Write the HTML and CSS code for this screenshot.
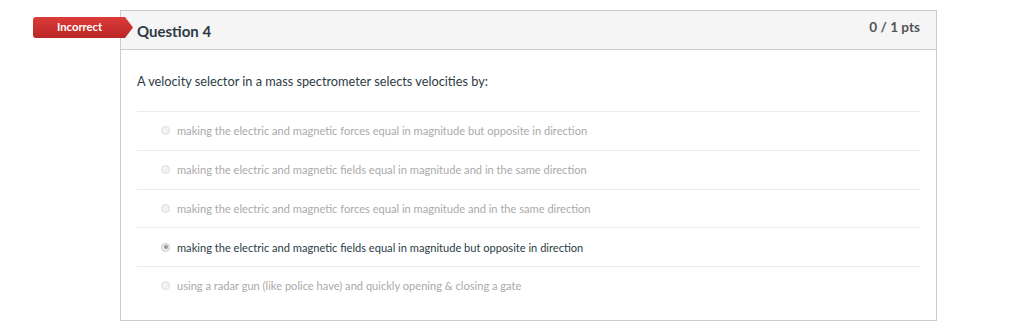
FILE: index.html
```html
<!DOCTYPE html>
<html>
<head>
<meta charset="utf-8">
<link rel="stylesheet" href="styles.css">
</head>
<body>
<div class="page">
  <div class="badge">Incorrect</div>
  <div class="card">
    <div class="card-header">
      <span class="title">Question 4</span>
      <span class="pts">0 / 1 pts</span>
    </div>
    <div class="card-body">
      <div class="question">A velocity selector in a mass spectrometer selects velocities by:</div>
      <div class="answers">
        <div class="answer"><span class="radio"></span><span class="label">making the electric and magnetic forces equal in magnitude but opposite in direction</span></div>
        <div class="answer"><span class="radio"></span><span class="label">making the electric and magnetic fields equal in magnitude and in the same direction</span></div>
        <div class="answer"><span class="radio"></span><span class="label">making the electric and magnetic forces equal in magnitude and in the same direction</span></div>
        <div class="answer selected"><span class="radio"></span><span class="label">making the electric and magnetic fields equal in magnitude but opposite in direction</span></div>
        <div class="answer"><span class="radio"></span><span class="label">using a radar gun (like police have) and quickly opening &amp; closing a gate</span></div>
      </div>
    </div>
  </div>
</div>
</body>
</html>
```
FILE: styles.css
```css
* { box-sizing: border-box; }
body {
  margin: 0;
  background: #fff;
  font-family: Lato, "Open Sans", sans-serif;
}
.page {
  position: relative;
  padding: 10px 0 0 120px;
}
.badge {
  position: absolute;
  left: 33px;
  top: 17px;
  width: 100px;
  height: 21px;
  background: linear-gradient(#dc3b38, #b92626);
  clip-path: polygon(0 0, 92px 0, 100px 50%, 92px 100%, 0 100%);
  border-radius: 3px 0 0 3px;
  color: #fff;
  font-size: 11.25px;
  font-weight: bold;
  line-height: 20px;
  padding-left: 24px;
  z-index: 2;
}
.card {
  width: 817px;
  border: 1px solid #c7cdd1;
}
.card-header {
  display: flex;
  justify-content: space-between;
  align-items: center;
  height: 39px;
  padding: 0 16px;
  background: #f5f5f5;
  border-bottom: 1px solid #c7cdd1;
}
.title {
  font-size: 15px;
  font-weight: bold;
  color: #2d3b45;
  padding-top: 2px;
}
.pts {
  font-size: 13.6px;
  font-weight: bold;
  color: #555;
  margin-top: -6px;
}
.card-body {
  padding: 0 16px 15px;
}
.question {
  font-size: 12.75px;
  color: #2d3b45;
  line-height: 16px;
  padding: 23px 0 22px;
}
.answer {
  display: flex;
  align-items: center;
  height: 38.75px;
  border-top: 1px solid #ebebeb;
  padding-left: 24px;
  color: #aaa;
  font-size: 11.1px;
}
.answer.selected { color: #2d3b45; }
.radio {
  width: 9px;
  height: 9px;
  border-radius: 50%;
  border: 1px solid #dcdcdc;
  background: #f3f3f3;
  margin-right: 7px;
  position: relative;
}
.answer.selected .radio { border-color: #c8c8c8; background: #eee; }
.answer.selected .radio::after {
  content: "";
  position: absolute;
  left: 1.5px;
  top: 1.5px;
  width: 4px;
  height: 4px;
  border-radius: 50%;
  background: #999;
}
```
